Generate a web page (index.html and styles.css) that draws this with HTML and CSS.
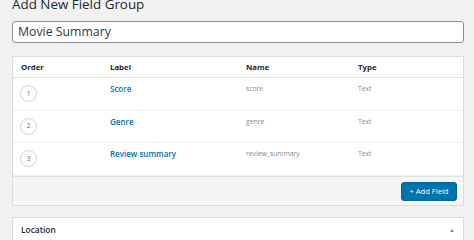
FILE: index.html
```html
<!DOCTYPE html>
<html>
<head>
<meta charset="utf-8">
<link rel="stylesheet" href="styles.css">
</head>
<body>
<div class="wrap">
  <h1 class="title">Add New Field Group</h1>
  <div class="title-input">Movie Summary</div>

  <div class="panel fields">
    <div class="thead">
      <div class="c c-order">Order</div>
      <div class="c c-label">Label</div>
      <div class="c c-name">Name</div>
      <div class="c c-type">Type</div>
    </div>
    <div class="row">
      <div class="c c-order"><span class="num">1</span></div>
      <div class="c c-label"><a class="lnk">Score</a></div>
      <div class="c c-name meta">score</div>
      <div class="c c-type meta">Text</div>
    </div>
    <div class="row">
      <div class="c c-order"><span class="num">2</span></div>
      <div class="c c-label"><a class="lnk">Genre</a></div>
      <div class="c c-name meta">genre</div>
      <div class="c c-type meta">Text</div>
    </div>
    <div class="row">
      <div class="c c-order"><span class="num">3</span></div>
      <div class="c c-label"><a class="lnk">Review summary</a></div>
      <div class="c c-name meta">review_summary</div>
      <div class="c c-type meta">Text</div>
    </div>
    <div class="tfoot">
      <button class="btn">+ Add Field</button>
    </div>
  </div>

  <div class="panel location">
    <span class="loc-title">Location</span>
    <span class="caret"></span>
  </div>
</div>
</body>
</html>
```

FILE: styles.css
```css
html, body {
  margin: 0;
  padding: 0;
  background: #f1f1f1;
  font-family: "Open Sans", "Noto Sans", sans-serif;
  color: #23282d;
  overflow: hidden;
}

.wrap {
  padding: 0 10px 0 12px;
}

.title {
  margin: -3px 0 9px 0;
  font-size: 13.4px;
  line-height: 15px;
  font-weight: 400;
  color: #23282d;
}

.title-input {
  height: 20px;
  border: 1px solid #8c8f94;
  border-radius: 3px;
  background: #fff;
  padding: 0 5px;
  font-size: 12.3px;
  line-height: 20px;
  color: #32373c;
  margin-bottom: 13px;
}

.panel {
  background: #fff;
  border: 1px solid #dcdcde;
}

.thead,
.row {
  display: grid;
  grid-template-columns: 89px 136px 112px 1fr;
}

.thead {
  height: 20px;
  border-bottom: 1px solid #e1e1e1;
  align-items: center;
}

.thead .c {
  font-size: 7.8px;
  font-weight: 700;
  color: #23282d;
  padding-left: 8px;
}

.row {
  height: 31.5px;
  border-bottom: 1px solid #eeeeee;
}

.row:last-of-type {
  border-bottom: none;
}

.row .c {
  padding-left: 8px;
  padding-top: 5px;
  font-size: 8px;
  line-height: 12px;
}

.row .c-order {
  padding-left: 7px;
  padding-top: 0;
  display: flex;
  align-items: center;
}

.num {
  width: 15px;
  height: 15px;
  border: 1px solid #cfcfcf;
  border-radius: 50%;
  display: flex;
  align-items: center;
  justify-content: center;
  font-size: 6.5px;
  color: #666;
}

.lnk {
  color: #0073aa;
  font-weight: 600;
  text-decoration: none;
}

.row .meta {
  font-size: 6.8px;
  color: #8a8a8a;
}

.tfoot {
  height: 29px;
  border-top: 1px solid #e1e1e1;
  background: #f5f5f5;
  display: flex;
  justify-content: flex-end;
  align-items: flex-start;
  padding: 5px 6px 0 0;
  box-sizing: border-box;
}

.btn {
  height: 19px;
  width: 56px;
  padding: 0;
  border: 1px solid #006799;
  border-radius: 3px;
  background: #0073aa;
  color: #fff;
  font-family: "Open Sans", "Noto Sans", sans-serif;
  font-size: 7.6px;
  line-height: 17px;
}

.location {
  margin-top: 11px;
  height: 30px;
  display: flex;
  align-items: flex-start;
  justify-content: space-between;
  padding: 6px 9px 0 8px;
}

.loc-title {
  font-size: 8.4px;
  line-height: 12px;
  font-weight: 600;
  color: #23282d;
}

.caret {
  margin-top: 5px;
  width: 0;
  height: 0;
  border-left: 2.5px solid transparent;
  border-right: 2.5px solid transparent;
  border-bottom: 3px solid #8a8a8a;
}
```
